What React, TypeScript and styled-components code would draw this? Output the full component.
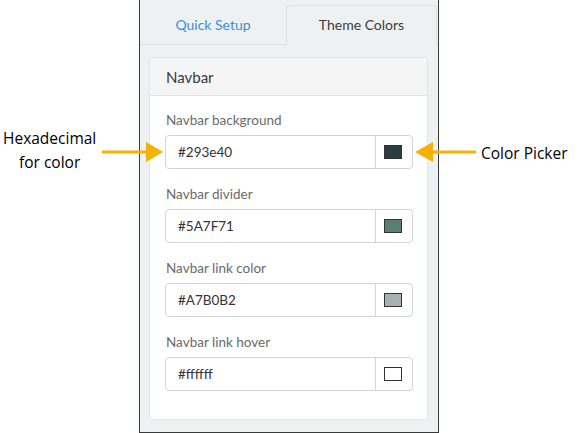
import React from "react";
import styled, { createGlobalStyle } from "styled-components";

const Global = createGlobalStyle`
  html, body { margin: 0; padding: 0; background: #ffffff; }
  body { width: 579px; height: 433px; overflow: hidden; }
  * { box-sizing: border-box; }
`;

const Page = styled.div`
  position: relative;
  width: 579px;
  height: 433px;
  display: flex;
  justify-content: flex-start;
  padding-left: 139px;
`;

const Frame = styled.div`
  width: 300px;
  height: 433px;
  border: 1px solid #3a3a3a;
  border-top: none;
  background: #eef1f2;
  display: flex;
  flex-direction: column;
  font-family: Lato, "Open Sans", sans-serif;
`;

const TabBar = styled.div`
  height: 45px;
  display: flex;
  align-items: flex-end;
  border-bottom: 1px solid #dde2e4;
  padding-right: 1px;
`;

const Tab = styled.div<{ $active?: boolean }>`
  flex: ${(p) => (p.$active ? "0 0 151px" : "1 1 auto")};
  height: ${(p) => (p.$active ? "40px" : "44px")};
  margin-bottom: ${(p) => (p.$active ? "-1px" : "0")};
  display: flex;
  align-items: center;
  justify-content: center;
  font-size: 14px;
  color: ${(p) => (p.$active ? "#3d3d3d" : "#3b8ed4")};
  background: #eef1f2;
  border: ${(p) => (p.$active ? "1px solid #dde2e4" : "none")};
  border-bottom: none;
  border-radius: 4px 4px 0 0;
  padding-top: ${(p) => (p.$active ? "0" : "5px")};
  padding-bottom: ${(p) => (p.$active ? "2px" : "0")};
`;

const Card = styled.div`
  margin: 12px 10px 12px 9px;
  flex: 1;
  background: #ffffff;
  border: 1px solid #e2e5e7;
  border-radius: 4px;
  display: flex;
  flex-direction: column;
  overflow: hidden;
`;

const CardHeader = styled.div`
  height: 38px;
  background: #f5f5f5;
  border-bottom: 1px solid #e3e3e3;
  display: flex;
  align-items: center;
  padding-left: 16px;
  font-size: 15px;
  color: #333a40;
`;

const CardBody = styled.div`
  padding: 15px 14px 0 15px;
  display: flex;
  flex-direction: column;
  gap: 16px;
`;

const Field = styled.div`
  display: flex;
  flex-direction: column;
  gap: 6px;
`;

const Label = styled.div`
  font-size: 13.5px;
  line-height: 18px;
  color: #6a6a6a;
  padding-left: 1px;
`;

const InputGroup = styled.div`
  height: 34px;
  display: flex;
  border: 1px solid #d0d4d6;
  border-radius: 4px;
  background: #fff;
`;

const HexText = styled.div`
  flex: 1;
  display: flex;
  align-items: center;
  padding-left: 12px;
  font-size: 13.5px;
  color: #333;
`;

const PickerCell = styled.div`
  width: 37px;
  border-left: 1px solid #d0d4d6;
  display: flex;
  align-items: center;
  justify-content: center;
  padding-right: 3px;
`;

const Swatch = styled.div<{ $color: string }>`
  width: 18px;
  height: 14px;
  background: ${(p) => p.$color};
  border: 1px solid #333;
`;

const Callout = styled.div<{ $left: number; $top: number }>`
  position: absolute;
  left: ${(p) => p.$left}px;
  top: ${(p) => p.$top}px;
  font-family: "Open Sans", Lato, sans-serif;
  font-size: 15.5px;
  line-height: 24px;
  color: #000;
  text-align: center;
`;

const ArrowSvg = styled.svg<{ $left: number; $top: number }>`
  position: absolute;
  left: ${(p) => p.$left}px;
  top: ${(p) => p.$top}px;
`;

const fields = [
  { label: "Navbar background", value: "#293e40", color: "#293e40" },
  { label: "Navbar divider", value: "#5A7F71", color: "#5A7F71" },
  { label: "Navbar link color", value: "#A7B0B2", color: "#A7B0B2" },
  { label: "Navbar link hover", value: "#ffffff", color: "#ffffff" },
];

export default function App() {
  return (
    <>
      <Global />
      <Page>
        <Frame>
          <TabBar>
            <Tab>Quick Setup</Tab>
            <Tab $active>Theme Colors</Tab>
          </TabBar>
          <Card>
            <CardHeader>Navbar</CardHeader>
            <CardBody>
              {fields.map((f) => (
                <Field key={f.label}>
                  <Label>{f.label}</Label>
                  <InputGroup>
                    <HexText>{f.value}</HexText>
                    <PickerCell>
                      <Swatch $color={f.color} />
                    </PickerCell>
                  </InputGroup>
                </Field>
              ))}
            </CardBody>
          </Card>
        </Frame>
        <Callout $left={3} $top={126}>
          Hexadecimal
          <br />
          for color
        </Callout>
        <ArrowSvg $left={100} $top={140} width="66" height="24" viewBox="0 0 66 24">
          <rect x="2" y="10.5" width="46" height="3" fill="#f5b105" />
          <polygon points="46,2 63,12 46,22" fill="#f5b105" />
        </ArrowSvg>
        <ArrowSvg $left={413} $top={140} width="66" height="24" viewBox="0 0 66 24">
          <rect x="18" y="10.5" width="45" height="3" fill="#f5b105" />
          <polygon points="20,2 2,12 20,22" fill="#f5b105" />
        </ArrowSvg>
        <Callout $left={481} $top={141}>Color Picker</Callout>
      </Page>
    </>
  );
}
